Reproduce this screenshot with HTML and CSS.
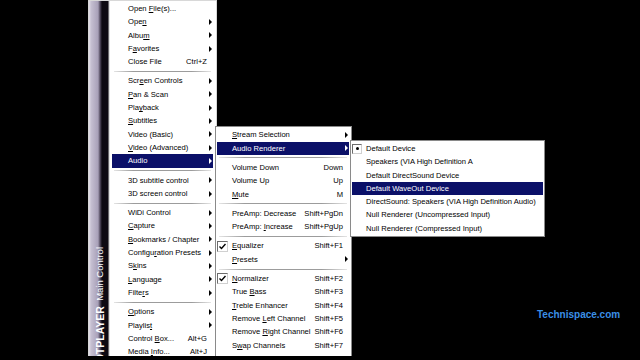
FILE: index.html
```html
<!DOCTYPE html>
<html lang="en">
<head>
    <meta charset="UTF-8">
    <meta name="viewport" content="width=device-width, initial-scale=1.0">
    <title>PotPlayer Main Control</title>
    <link rel="stylesheet" href="styles.css">
</head>
<body>
    <div class="screen">
        <!-- Hauptmenue mit Seitenleiste -->
        <div class="menu menu-main">
            <div class="strip">
                <span class="strip-title"><b>POTPLAYER</b>&nbsp;&nbsp;Main Control</span>
            </div>
            <div class="items">
                <div class="row"><span class="mark"></span><span class="label">Open <u>F</u>ile(s)...</span><span class="key"></span><span class="arrow"></span></div>
                <div class="row"><span class="mark"></span><span class="label">Ope<u>n</u></span><span class="key"></span><span class="arrow more"></span></div>
                <div class="row"><span class="mark"></span><span class="label">Albu<u>m</u></span><span class="key"></span><span class="arrow more"></span></div>
                <div class="row"><span class="mark"></span><span class="label">F<u>a</u>vorites</span><span class="key"></span><span class="arrow more"></span></div>
                <div class="row"><span class="mark"></span><span class="label">Close File</span><span class="key">Ctrl+Z</span><span class="arrow"></span></div>
                <div class="sep"></div>
                <div class="row"><span class="mark"></span><span class="label">Scr<u>e</u>en Controls</span><span class="key"></span><span class="arrow more"></span></div>
                <div class="row"><span class="mark"></span><span class="label"><u>P</u>an &amp; Scan</span><span class="key"></span><span class="arrow more"></span></div>
                <div class="row"><span class="mark"></span><span class="label">Pla<u>y</u>back</span><span class="key"></span><span class="arrow more"></span></div>
                <div class="row"><span class="mark"></span><span class="label"><u>S</u>ubtitles</span><span class="key"></span><span class="arrow more"></span></div>
                <div class="row"><span class="mark"></span><span class="label">Video (Basic)</span><span class="key"></span><span class="arrow more"></span></div>
                <div class="row"><span class="mark"></span><span class="label"><u>V</u>ideo (Advanced)</span><span class="key"></span><span class="arrow more"></span></div>
                <div class="row active"><span class="mark"></span><span class="label">Audio</span><span class="key"></span><span class="arrow more"></span></div>
                <div class="sep"></div>
                <div class="row"><span class="mark"></span><span class="label">3D subtitle control</span><span class="key"></span><span class="arrow more"></span></div>
                <div class="row"><span class="mark"></span><span class="label">3D screen control</span><span class="key"></span><span class="arrow more"></span></div>
                <div class="sep"></div>
                <div class="row"><span class="mark"></span><span class="label">WiDi Control</span><span class="key"></span><span class="arrow more"></span></div>
                <div class="row"><span class="mark"></span><span class="label"><u>C</u>apture</span><span class="key"></span><span class="arrow more"></span></div>
                <div class="row"><span class="mark"></span><span class="label"><u>B</u>ookmarks / Chapter</span><span class="key"></span><span class="arrow more"></span></div>
                <div class="row"><span class="mark"></span><span class="label">Configu<u>r</u>ation Presets</span><span class="key"></span><span class="arrow more"></span></div>
                <div class="row"><span class="mark"></span><span class="label">S<u>k</u>ins</span><span class="key"></span><span class="arrow more"></span></div>
                <div class="row"><span class="mark"></span><span class="label"><u>L</u>anguage</span><span class="key"></span><span class="arrow more"></span></div>
                <div class="row"><span class="mark"></span><span class="label">Filte<u>r</u>s</span><span class="key"></span><span class="arrow more"></span></div>
                <div class="sep"></div>
                <div class="row"><span class="mark"></span><span class="label"><u>O</u>ptions</span><span class="key"></span><span class="arrow more"></span></div>
                <div class="row"><span class="mark"></span><span class="label">Playlis<u>t</u></span><span class="key"></span><span class="arrow more"></span></div>
                <div class="row"><span class="mark"></span><span class="label">Control <u>B</u>ox...</span><span class="key">Alt+G</span><span class="arrow"></span></div>
                <div class="row"><span class="mark"></span><span class="label">Media <u>I</u>nfo...</span><span class="key">Alt+J</span><span class="arrow"></span></div>
            </div>
        </div>

        <!-- Untermenue Audio -->
        <div class="menu menu-audio">
            <div class="row"><span class="mark"></span><span class="label"><u>S</u>tream Selection</span><span class="key"></span><span class="arrow more"></span></div>
            <div class="row active"><span class="mark"></span><span class="label">Audio Renderer</span><span class="key"></span><span class="arrow more"></span></div>
            <div class="sep"></div>
            <div class="row"><span class="mark"></span><span class="label">Volume Down</span><span class="key">Down</span><span class="arrow"></span></div>
            <div class="row"><span class="mark"></span><span class="label">Volume Up</span><span class="key">Up</span><span class="arrow"></span></div>
            <div class="row"><span class="mark"></span><span class="label"><u>M</u>ute</span><span class="key">M</span><span class="arrow"></span></div>
            <div class="sep"></div>
            <div class="row"><span class="mark"></span><span class="label">PreAmp: Decrease</span><span class="key">Shift+PgDn</span><span class="arrow"></span></div>
            <div class="row"><span class="mark"></span><span class="label">PreAmp: <u>I</u>ncrease</span><span class="key">Shift+PgUp</span><span class="arrow"></span></div>
            <div class="sep"></div>
            <div class="row">
                <span class="mark"><span class="box"><svg width="7" height="7" viewBox="0 0 7 7"><path d="M0.5 3.5 L2.5 5.5 L6.5 1" fill="none" stroke="#000" stroke-width="1.4"/></svg></span></span>
                <span class="label"><u>E</u>qualizer</span><span class="key">Shift+F1</span><span class="arrow"></span>
            </div>
            <div class="row"><span class="mark"></span><span class="label"><u>P</u>resets</span><span class="key"></span><span class="arrow more"></span></div>
            <div class="sep"></div>
            <div class="row">
                <span class="mark"><span class="box"><svg width="7" height="7" viewBox="0 0 7 7"><path d="M0.5 3.5 L2.5 5.5 L6.5 1" fill="none" stroke="#000" stroke-width="1.4"/></svg></span></span>
                <span class="label"><u>N</u>ormalizer</span><span class="key">Shift+F2</span><span class="arrow"></span>
            </div>
            <div class="row"><span class="mark"></span><span class="label">True <u>B</u>ass</span><span class="key">Shift+F3</span><span class="arrow"></span></div>
            <div class="row"><span class="mark"></span><span class="label"><u>T</u>reble Enhancer</span><span class="key">Shift+F4</span><span class="arrow"></span></div>
            <div class="row"><span class="mark"></span><span class="label">Remove <u>L</u>eft Channel</span><span class="key">Shift+F5</span><span class="arrow"></span></div>
            <div class="row"><span class="mark"></span><span class="label">Remove <u>R</u>ight Channel</span><span class="key">Shift+F6</span><span class="arrow"></span></div>
            <div class="row"><span class="mark"></span><span class="label">S<u>w</u>ap Channels</span><span class="key">Shift+F7</span><span class="arrow"></span></div>
            <div class="row"><span class="mark"></span><span class="label">Downmix to Mono</span><span class="key">Shift+F8</span><span class="arrow"></span></div>
        </div>

        <!-- Untermenue Audio Renderer -->
        <div class="menu menu-renderer">
            <div class="row"><span class="mark"><span class="box radio"><span class="dot"></span></span></span><span class="label">Default Device</span></div>
            <div class="row"><span class="mark"></span><span class="label">Speakers (VIA High Definition A</span></div>
            <div class="row"><span class="mark"></span><span class="label">Default DirectSound Device</span></div>
            <div class="row active"><span class="mark"></span><span class="label">Default WaveOut Device</span></div>
            <div class="row"><span class="mark"></span><span class="label">DirectSound: Speakers (VIA High Definition Audio)</span></div>
            <div class="row"><span class="mark"></span><span class="label">Null Renderer (Uncompressed Input)</span></div>
            <div class="row"><span class="mark"></span><span class="label">Null Renderer (Compressed Input)</span></div>
        </div>

        <div class="watermark">Technispace.com</div>
    </div>
</body>
</html>
```

FILE: styles.css
```css
body {
    margin: 0;
    background-color: #000;
    font-family: "Liberation Sans", Arial, sans-serif;
}
.screen {
    position: relative;
    width: 640px;
    height: 356px;
    overflow: hidden;
    background-color: #000;
}
.menu {
    position: absolute;
    box-sizing: border-box;
    background-color: #fff;
    border: 1px solid #8a8a8a;
    color: #000;
    font-size: 7.6px;
}
.menu-main {
    left: 88px;
    top: 0;
    width: 129px;
    height: 380px;
    display: flex;
    border-color: #d8d8d8;
}
.strip {
    width: 21px;
    flex: none;
    display: flex;
    flex-direction: column;
    justify-content: flex-end;
    align-items: center;
    padding-bottom: 10px;
    background: linear-gradient(to right, #e4e0ea 0, #c6c0d2 2px, #a8a0b8 9px, #564e62 11px, #0e0a12 13px, #0e0a12 19px, #c8c8c8 20px, #fff 21px);
}
.strip-title {
    writing-mode: vertical-rl;
    transform: rotate(180deg);
    color: #fff;
    font-size: 9.5px;
    white-space: nowrap;
}
.strip-title b {
    font-size: 10.5px;
}
.items {
    flex: 1;
    padding: 1px 3px 2px 2px;
}
.row {
    display: flex;
    align-items: center;
    height: 13.3px;
    line-height: 13.3px;
    white-space: nowrap;
}
.row.active {
    background-color: #0b1068;
    color: #fff;
}
.mark {
    width: 16px;
    height: 100%;
    flex: none;
    display: flex;
    align-items: center;
}
.label {
    flex: 1;
}
.arrow {
    width: 6px;
    flex: none;
    display: flex;
    justify-content: flex-end;
}
.arrow.more::after {
    content: "";
    margin-right: 1px;
    border-left: 3px solid currentColor;
    border-top: 3px solid transparent;
    border-bottom: 3px solid transparent;
}
.sep {
    height: 6px;
    display: flex;
    align-items: center;
    padding: 0 2px;
}
.sep::after {
    content: "";
    flex: 1;
    height: 1px;
    background: linear-gradient(to right, #e4e4e4, #9c9c9c 20%, #9c9c9c 80%, #e4e4e4);
}
.menu-audio {
    left: 215px;
    top: 126px;
    width: 137px;
    padding: 1.4px 2px 2px 1px;
}
.menu-audio .mark {
    width: 15px;
}
.menu-renderer {
    left: 350px;
    top: 140px;
    width: 195px;
    padding: 1px;
}
.menu-renderer .mark {
    width: 14px;
}
.box {
    box-sizing: border-box;
    width: 11px;
    height: 11px;
    display: flex;
    align-items: center;
    justify-content: center;
    border: 1px solid #6c6c6c;
    border-right-color: #d0d0d0;
    border-bottom-color: #d0d0d0;
    background-color: #fff;
}
.box.radio {
    width: 10px;
    height: 10px;
}
.dot {
    width: 3px;
    height: 3px;
    border-radius: 50%;
    background-color: #000;
}
.watermark {
    position: absolute;
    left: 537px;
    top: 309px;
    color: #3b8fe6;
    font-size: 10px;
    font-weight: bold;
    line-height: 12px;
}
```
